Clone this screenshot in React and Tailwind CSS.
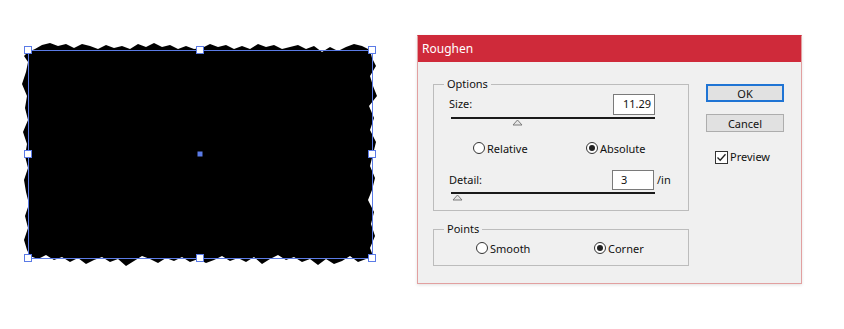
const FONT = { fontFamily: '"Noto Sans", "Open Sans", sans-serif' }

const topEdge = [
  [28, 52], [35, 49], [42, 45], [50, 43], [58, 46], [66, 44], [74, 48], [82, 44], [90, 46], [98, 49],
  [106, 45], [114, 48], [122, 46], [130, 49], [138, 44], [146, 47], [154, 43], [162, 47], [170, 45],
  [178, 49], [186, 46], [194, 49], [202, 48], [210, 44], [218, 47], [226, 45], [234, 49], [242, 46],
  [250, 49], [258, 44], [266, 47], [274, 45], [282, 49], [290, 47], [298, 45], [306, 49], [314, 46],
  [322, 52], [330, 47], [338, 51], [346, 47], [354, 44], [362, 46], [370, 50],
]
const rightEdge = [
  [372, 58], [376, 66], [370, 76], [373, 86], [377, 96], [369, 106], [374, 118], [370, 130],
  [376, 142], [373, 154], [370, 166], [375, 178], [372, 190], [368, 200], [374, 212], [371, 224],
  [375, 236], [370, 248], [373, 256],
]
const bottomEdge = [
  [366, 259], [358, 262], [350, 256], [342, 261], [334, 264], [326, 259], [318, 265], [310, 259],
  [302, 262], [294, 257], [286, 260], [278, 255], [270, 259], [262, 264], [254, 257], [246, 262],
  [238, 258], [230, 261], [222, 256], [214, 260], [206, 263], [198, 259], [190, 262], [182, 257],
  [174, 261], [166, 258], [158, 263], [150, 259], [142, 256], [134, 261], [126, 266], [118, 259],
  [110, 262], [102, 257], [94, 260], [86, 264], [78, 258], [70, 262], [62, 257], [54, 260],
  [46, 255], [38, 259], [30, 256],
]
const leftEdge = [
  [27, 250], [24, 240], [28, 228], [25, 216], [29, 204], [26, 192], [24, 180], [28, 168],
  [25, 156], [27, 144], [23, 132], [28, 120], [25, 108], [27, 96], [22, 84], [26, 72], [28, 62], [24, 56],
]

const shapePoints = [...topEdge, ...rightEdge, ...bottomEdge, ...leftEdge]
  .map(([x, y]) => `${x - 20},${y - 35}`)
  .join(" ")

const handles = [
  [28, 50], [200, 50], [372, 50],
  [28, 154], [372, 154],
  [28, 258], [200, 258], [372, 258],
]

const Artwork = () => (
  <svg width="360" height="235" viewBox="0 0 360 235" className="mt-[35px] ml-[20px] shrink-0">
    <polygon points={shapePoints} fill="#000" />
    <rect x="8.5" y="15.5" width="344" height="208" fill="none" stroke="#5b7be6" strokeWidth="1" />
    {handles.map(([x, y]) => (
      <rect
        key={`${x}-${y}`}
        x={x - 20 - 3.5}
        y={y - 35 - 3.5}
        width="7"
        height="7"
        fill="#fff"
        stroke="#5b7be6"
        strokeWidth="1"
      />
    ))}
    <rect x="177.5" y="116.5" width="5" height="5" fill="#5b7be6" />
  </svg>
)

const Radio = ({ checked, label }) => (
  <div className="flex items-center h-[16px]">
    <span className="w-[12px] h-[12px] rounded-full border border-[#333] bg-white flex items-center justify-center">
      {checked && <span className="w-[6px] h-[6px] rounded-full bg-[#222]" />}
    </span>
    <span className="ml-[2px] text-[11px] leading-none text-[#111]">{label}</span>
  </div>
)

const Thumb = () => (
  <svg width="11" height="7" viewBox="0 0 11 7">
    <polygon points="5.5,1 10,6 1,6" fill="#e6e6e6" stroke="#7a7a7a" strokeWidth="1" />
  </svg>
)

const NumberBox = ({ value, height }) => (
  <div
    className={`w-[42px] ${height} border border-[#7a7a7a] bg-white flex items-center text-[11px] text-[#111]`}
  >
    {value}
  </div>
)

export default function App() {
  return (
    <div className="w-[844px] h-[329px] bg-white flex items-start" style={FONT}>
      <Artwork />

      <div className="ml-[37px] mt-[35px] w-[385px] h-[249px] bg-[#f0f0f0] border border-[#e2a0a0] border-t-[#cf2a3a] shadow-[0_1px_3px_rgba(0,0,0,0.12)] flex flex-col shrink-0">
        <div className="h-[26px] bg-[#cf2a3a] flex items-center pl-[4px] text-white text-[12px]">
          Roughen
        </div>

        <div className="flex pl-[15px] pt-[14px]">
          <div className="w-[256px]">
            <fieldset className="border border-[#bcbcbc] p-0 m-0">
              <legend className="ml-[10px] px-[3px] text-[11px] leading-[16px] text-[#111]">Options</legend>
              <div className="pl-[15px] pt-[2px] pb-[8px]">
                <div className="flex items-center h-[21px]">
                  <span className="w-[164px] text-[11px] text-[#111]">Size:</span>
                  <NumberBox value={<span className="ml-auto pr-[3px]">11.29</span>} height="h-[21px]" />
                </div>
                <div className="ml-[2px] mt-[2px] w-[204px] h-[2px] bg-[#1a1a1a]" />
                <div className="h-[8px] pl-[63px]">
                  <Thumb />
                </div>

                <div className="flex mt-[13px] pl-[24px]">
                  <div className="w-[113px]">
                    <Radio label="Relative" />
                  </div>
                  <Radio checked label="Absolute" />
                </div>

                <div className="flex items-center h-[20px] mt-[14px]">
                  <span className="w-[163px] text-[11px] text-[#111]">Detail:</span>
                  <NumberBox value={<span className="pl-[8px]">3</span>} height="h-[20px]" />
                  <span className="ml-[3px] text-[11px] text-[#111]">/in</span>
                </div>
                <div className="ml-[2px] mt-[2px] w-[204px] h-[2px] bg-[#1a1a1a]" />
                <div className="h-[8px] pl-[3px]">
                  <Thumb />
                </div>
              </div>
            </fieldset>

            <fieldset className="mt-[10px] border border-[#bcbcbc] p-0 m-0">
              <legend className="ml-[10px] px-[3px] text-[11px] leading-[16px] text-[#111]">Points</legend>
              <div className="flex pl-[42px] pt-[3px] pb-[9px]">
                <div className="w-[118px]">
                  <Radio label="Smooth" />
                </div>
                <Radio checked label="Corner" />
              </div>
            </fieldset>
          </div>

          <div className="ml-[17px] pt-[8px] flex flex-col">
            <button className="w-[78px] h-[18px] border-2 border-[#1f74d4] bg-[#e1e1e1] text-[11px] leading-none text-[#111] flex items-center justify-center">
              OK
            </button>
            <button className="mt-[12px] w-[78px] h-[18px] border border-[#adadad] bg-[#e1e1e1] text-[11px] leading-none text-[#111] flex items-center justify-center">
              Cancel
            </button>
            <label className="mt-[17px] ml-[9px] flex items-center">
              <span className="w-[13px] h-[13px] border border-[#333] bg-white flex items-center justify-center">
                <svg width="11" height="11" viewBox="0 0 11 11">
                  <path d="M1.5 5.5 L4.2 8.3 L9.5 2.2" fill="none" stroke="#222" strokeWidth="1.3" />
                </svg>
              </span>
              <span className="ml-[2px] text-[11px] text-[#111]">Preview</span>
            </label>
          </div>
        </div>
      </div>
    </div>
  )
}
